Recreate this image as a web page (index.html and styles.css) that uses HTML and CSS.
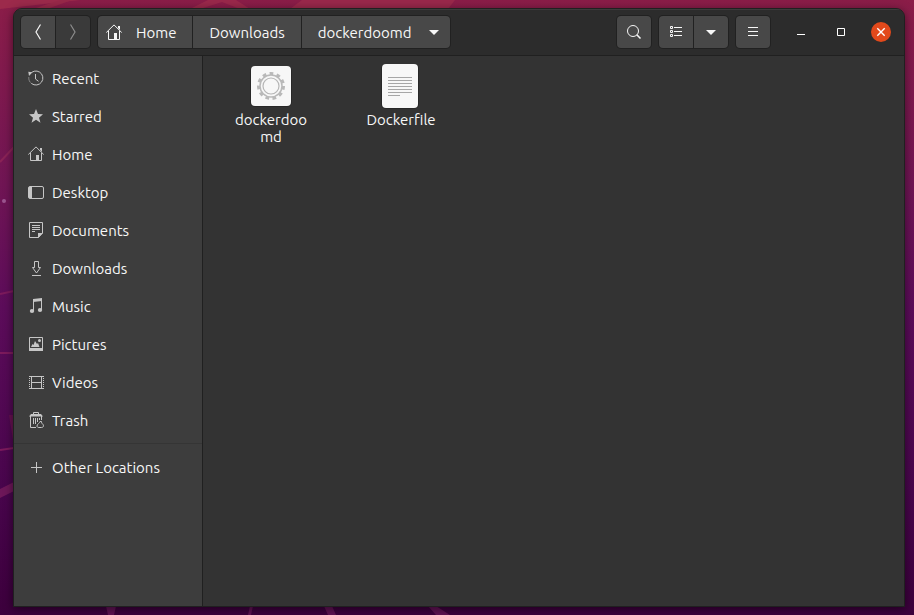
FILE: index.html
```html
<!DOCTYPE html>
<html lang="en">

<head>
    <meta charset="UTF-8">
    <meta name="viewport" content="width=device-width, initial-scale=1.0">
    <title>dockerdoomd</title>
    <link rel="stylesheet" href="styles.css">
</head>

<body>
    <!-- wallpaper -->
    <svg class="wallpaper" viewBox="0 0 914 615" preserveAspectRatio="none" aria-hidden="true">
        <path d="M0 0H80L0 9z" fill="#9c2a4b"/>
        <path d="M60 0H72L50 8H36z" fill="#982849"/>
        <path d="M302 0H455L448 9H290z" fill="#9a284b"/>
        <path d="M190 9L208 0H236L250 9H240L222 2L200 9z" fill="#9a284b"/>
        <path d="M0 162L14 147" stroke="#8a2356" stroke-width="2"/>
        <path d="M0 294L14 291M0 353L14 353M0 450L14 448" stroke="#7c1a5c" stroke-width="2"/>
        <path d="M9 415L14 415V446z" fill="#651150"/>
        <path d="M0 489L14 482V491L0 498z" fill="#6d1759"/>
        <path d="M106 606H116L114 615H108zM250 606H253L251 615H248zM324 606H332L336 615H328zM428 606H436L450 615H436z" fill="#5f1253"/>
        <circle cx="4" cy="201" r="2" fill="#9c5590"/>
    </svg>

    <div class="window">
        <header class="headerbar">
            <div class="linked">
                <button class="btn icon-btn" title="Back">
                    <svg class="icon" viewBox="0 0 16 16"><path d="M10.5 0.5L6 8l4.5 7.5" fill="none" stroke="currentColor" stroke-width="1.2"/></svg>
                </button>
                <button class="btn icon-btn" title="Forward" disabled>
                    <svg class="icon" viewBox="0 0 16 16"><path d="M5.5 0.5L10 8l-4.5 7.5" fill="none" stroke="currentColor" stroke-width="1.2"/></svg>
                </button>
            </div>

            <nav class="linked pathbar">
                <button class="btn path-btn path-home">
                    <svg class="icon" viewBox="0 0 16 16">
                        <path d="M0.3 8.5L8 0.9l7.700 7.600M2.500 7v8.500h11V7" fill="none" stroke="currentColor"/>
                        <path d="M8 9h3v6H8zM12 2h2v4l-2-2z" fill="currentColor"/>
                    </svg>
                    Home
                </button>
                <button class="btn path-btn">Downloads</button>
                <button class="btn path-btn path-current">
                    dockerdoomd
                    <svg class="icon" viewBox="0 0 16 16"><path d="M3 6h10l-5 5z" fill="currentColor"/></svg>
                </button>
            </nav>

            <div class="tools">
                <div class="linked">
                    <button class="btn icon-btn" title="Search">
                        <svg class="icon" viewBox="0 0 16 16">
                            <circle cx="7" cy="7" r="5.500" fill="none" stroke="currentColor"/>
                            <path d="M10.800 10.800l3.700 3.700" stroke="currentColor" stroke-width="1.600"/>
                        </svg>
                    </button>
                </div>
                <div class="linked">
                    <button class="btn icon-btn" title="List view">
                        <svg class="icon" viewBox="0 0 16 16">
                            <path d="M2.500 2.500h2v2h-2zM2.500 6.500h2v2h-2zM2.500 10.500h2v2h-2zM6 3.500h8M6 7.500h8M6 11.500h8" fill="none" stroke="currentColor"/>
                        </svg>
                    </button>
                    <button class="btn icon-btn" title="View options">
                        <svg class="icon" viewBox="0 0 16 16"><path d="M3 6h10l-5 5z" fill="currentColor"/></svg>
                    </button>
                </div>
                <div class="linked">
                    <button class="btn icon-btn" title="Menu">
                        <svg class="icon" viewBox="0 0 16 16"><path d="M3 3.500h10M3 7.500h10M3 11.500h10" stroke="currentColor"/></svg>
                    </button>
                </div>
                <div class="titlebuttons">
                    <button class="win-btn" title="Minimize">
                        <svg class="icon" viewBox="0 0 16 16"><path d="M4 10.500h8" stroke="currentColor"/></svg>
                    </button>
                    <button class="win-btn" title="Maximize">
                        <svg class="icon" viewBox="0 0 16 16"><path d="M4.500 4.500h7v7h-7z" fill="none" stroke="currentColor"/></svg>
                    </button>
                    <button class="win-btn close" title="Close">
                        <svg class="icon" viewBox="0 0 16 16"><path d="M4.300 4.300l7.400 7.400M11.700 4.300l-7.400 7.400" stroke="currentColor" stroke-width="1.400"/></svg>
                    </button>
                </div>
            </div>
        </header>

        <div class="main">
            <nav class="sidebar">
                <a class="place" href="#recent">
                    <svg class="icon" viewBox="0 0 16 16">
                        <path d="M1.800 4.500A7 7 0 1 1 3.500 13.500" fill="none" stroke="currentColor"/>
                        <path d="M0.300 1.800L4.200 2.200 1 6z" fill="currentColor"/>
                        <path d="M7.500 4v5l3 2.300" fill="none" stroke="currentColor"/>
                        <path d="M0.800 7.500A7 7 0 0 0 3.500 13.500" fill="none" stroke="currentColor" stroke-dasharray="1 1"/>
                    </svg>
                    Recent
                </a>
                <a class="place" href="#starred">
                    <svg class="icon" viewBox="0 0 16 16"><path d="M8 1l2 5 5 0.300-4 3.400 1.500 5L8 11.800 3.500 14.700 5 9.700 1 6.300 6 6z" fill="currentColor"/></svg>
                    Starred
                </a>
                <a class="place" href="#home">
                    <svg class="icon" viewBox="0 0 16 16">
                        <path d="M0.300 8.500L8 0.900l7.700 7.600M2.500 7v7.500h11V7" fill="none" stroke="currentColor"/>
                        <path d="M8 9h3v6H8zM12 2h2v4l-2-2z" fill="currentColor"/>
                    </svg>
                    Home
                </a>
                <a class="place" href="#desktop">
                    <svg class="icon" viewBox="0 0 16 16">
                        <rect x="0.500" y="2.500" width="15" height="12" rx="1.500" fill="none" stroke="currentColor"/>
                        <path d="M1 3h3v11H1z" fill="currentColor"/>
                    </svg>
                    Desktop
                </a>
                <a class="place" href="#documents">
                    <svg class="icon" viewBox="0 0 16 16">
                        <path d="M1.500 0.500h13v10.500l-4 4.500h-9z" fill="none" stroke="currentColor"/>
                        <path d="M4 3.500h8M4 5.500h8M4 7.500h8M4 9.500h3" stroke="currentColor"/>
                        <path d="M10 11h5l-5 5z" fill="currentColor"/>
                    </svg>
                    Documents
                </a>
                <a class="place" href="#downloads">
                    <svg class="icon" viewBox="0 0 16 16">
                        <path d="M6.500 1.500h4v6h2l-4 5.500-4-5.500h2zM4 15.500h9" fill="none" stroke="currentColor"/>
                    </svg>
                    Downloads
                </a>
                <a class="place" href="#music">
                    <svg class="icon" viewBox="0 0 16 16">
                        <path d="M5.500 13V1.500M13.500 12V1" fill="none" stroke="currentColor"/>
                        <path d="M5 1l9-1v3L5 4z" fill="currentColor"/>
                        <ellipse cx="4" cy="13" rx="2.200" ry="2" fill="currentColor"/>
                        <ellipse cx="12" cy="12" rx="2.200" ry="2" fill="currentColor"/>
                    </svg>
                    Music
                </a>
                <a class="place" href="#pictures">
                    <svg class="icon" viewBox="0 0 16 16">
                        <path d="M1.500 1.500h13v13h-13z" fill="none" stroke="currentColor"/>
                        <path d="M1 12h14v3H1zM3 11l1.500-3 1 1L7 5l2 3 1-1 1.500 4z" fill="currentColor"/>
                        <circle cx="11.500" cy="4.500" r="1.500" fill="currentColor"/>
                    </svg>
                    Pictures
                </a>
                <a class="place" href="#videos">
                    <svg class="icon" viewBox="0 0 16 16">
                        <path d="M1 2.500h15M1 14.500h15M3.500 2v13M13.500 2v13M4 8.500h9" fill="none" stroke="currentColor"/>
                        <path d="M1.500 2v13M15.500 2v13" stroke="currentColor" stroke-dasharray="1 1"/>
                    </svg>
                    Videos
                </a>
                <a class="place" href="#trash">
                    <svg class="icon" viewBox="0 0 16 16">
                        <path d="M5.500 2V0.500h5V2" fill="none" stroke="currentColor"/>
                        <path d="M1 4.500L3 2h10l2 2.500z" fill="currentColor"/>
                        <path d="M2.500 4v11.500H8M13.500 4v4M5.500 6v6M7.500 6v6M9.500 6v4M11.500 6v2" fill="none" stroke="currentColor"/>
                        <path d="M12 9.500c0 1.500-3 2.500-3 4.500 0 1 .8 1.500 2 1.500h2.500c1.200 0 2-.7 2-1.700 0-2-2.500-2-2-4.300z" fill="none" stroke="currentColor"/>
                    </svg>
                    Trash
                </a>
                <hr class="separator">
                <a class="place" href="#other">
                    <svg class="icon" viewBox="0 0 16 16"><path d="M3 8.500h11M8.500 3v11" stroke="currentColor"/></svg>
                    Other Locations
                </a>
            </nav>

            <main class="files">
                <div class="file">
                    <svg class="file-icon" viewBox="0 0 48 48">
                        <rect x="3" y="4" width="42" height="41" rx="5" fill="#282828"/>
                        <rect x="4" y="4" width="40" height="40" rx="4" fill="#f7f7f7"/>
                        <circle cx="24" cy="24" r="12.500" fill="none" stroke="#b9b9b9" stroke-width="3" stroke-dasharray="3.700 3.440"/>
                        <circle cx="24" cy="24" r="11" fill="none" stroke="#b9b9b9" stroke-width="1.500"/>
                        <circle cx="24" cy="24" r="8" fill="none" stroke="#b5b5b5" stroke-width="1.200"/>
                    </svg>
                    <span class="file-name">dockerdoomd</span>
                </div>
                <div class="file">
                    <svg class="file-icon" viewBox="0 0 48 48">
                        <rect x="4" y="2" width="38" height="45" rx="5" fill="#282828"/>
                        <rect x="5" y="2" width="36" height="44" rx="4" fill="#f7f7f7"/>
                        <path d="M11 15.500h24M11 18.500h24M11 21.500h24M11 24.500h24M11 27.500h24M11 30.500h24M11 33.500h12" stroke="#a6a6a6"/>
                    </svg>
                    <span class="file-name">Dockerfile</span>
                </div>
            </main>
        </div>
    </div>
</body>

</html>
```
FILE: styles.css
```css
* {
    box-sizing: border-box;
}

body {
    margin: 0;
    padding: 8px 9px 8px 13px;
    height: 100vh;
    display: flex;
    font-family: Ubuntu, "Noto Sans", sans-serif;
    font-size: 15px;
    color: #f7f7f7;
    background: linear-gradient(#8b1d48 0%, #701554 30%, #5c0c5a 50%, #48054c 80%, #3c003c 100%);
    overflow: hidden;
}

.wallpaper {
    position: absolute;
    top: 0;
    left: 0;
    width: 100%;
    height: 100%;
}

.window {
    position: relative;
    flex: 1;
    display: flex;
    flex-direction: column;
    border: 1px solid #202020;
    border-radius: 9px 9px 0 0;
    background: #333333;
    box-shadow: 0 2px 10px rgba(0, 0, 0, 0.5);
    overflow: hidden;
}

.icon {
    width: 16px;
    height: 16px;
    flex: none;
    display: block;
}

/* header bar */
.headerbar {
    display: flex;
    align-items: center;
    gap: 6px;
    height: 47px;
    padding: 0 6px;
    background: #2c2c2c;
    border-bottom: 1px solid #202020;
    box-shadow: inset 0 1px #3b3b3b;
}

.linked {
    display: flex;
    gap: 1px;
    padding: 1px;
    background: #212121;
    border-radius: 5px;
}

.btn {
    display: flex;
    align-items: center;
    justify-content: center;
    height: 32px;
    padding: 0 16px;
    border: 0;
    background: #484848;
    color: #f7f7f7;
    font: inherit;
}

.btn:first-child {
    border-top-left-radius: 4px;
    border-bottom-left-radius: 4px;
}

.btn:last-child {
    border-top-right-radius: 4px;
    border-bottom-right-radius: 4px;
}

.btn:disabled {
    background: #3a3a3a;
    color: #8c8c8c;
}

.icon-btn {
    width: 34px;
    padding: 0;
}

.path-btn {
    gap: 14px;
}

.path-home {
    padding-left: 8px;
}

.path-current {
    padding-right: 8px;
}

.tools {
    display: flex;
    align-items: center;
    gap: 6px;
    margin-left: auto;
}

.titlebuttons {
    display: flex;
    gap: 20px;
    padding: 0 7px 0 14px;
}

.win-btn {
    display: flex;
    align-items: center;
    justify-content: center;
    width: 20px;
    height: 20px;
    padding: 0;
    border: 0;
    border-radius: 50%;
    background: none;
    color: #ffffff;
}

.close {
    background: #e2491b;
}

/* content */
.main {
    flex: 1;
    display: flex;
}

.sidebar {
    width: 189px;
    padding-top: 3px;
    background: #3d3d3d;
    border-right: 1px solid #202020;
}

.place {
    display: flex;
    align-items: center;
    gap: 8px;
    height: 38px;
    padding-left: 14px;
    color: #f7f7f7;
    text-decoration: none;
}

.place .icon {
    color: #c6c6c6;
}

.separator {
    height: 1px;
    margin: 4px 0;
    border: 0;
    background: #353535;
}

.files {
    flex: 1;
    display: flex;
    align-items: flex-start;
    padding: 6px 3px;
}

.file {
    display: flex;
    flex-direction: column;
    align-items: center;
    gap: 1px;
    width: 130px;
}

.file-icon {
    width: 48px;
    height: 48px;
}

.file-name {
    width: 76px;
    line-height: 17px;
    text-align: center;
    word-break: break-all;
}
```
